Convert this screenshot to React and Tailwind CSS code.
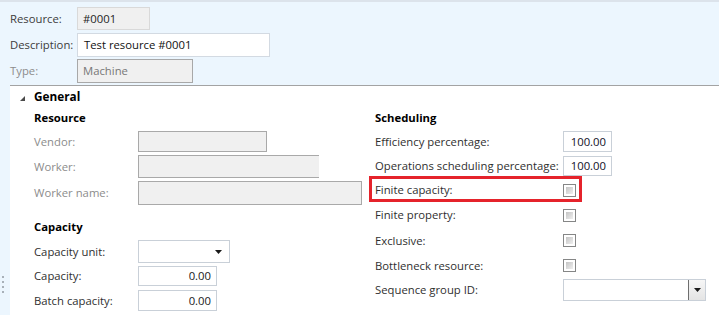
import React from "react";

const font = { fontFamily: '"Open Sans", "Noto Sans", sans-serif' };

function Arrow() {
  return (
    <svg width="7" height="4" viewBox="0 0 7 4" className="block">
      <polygon points="0,0 7,0 3.5,4" fill="#1a1a1a" />
    </svg>
  );
}

function Checkbox() {
  return (
    <div className="w-[13px] h-[13px] border border-[#858686] bg-white p-[2px]">
      <div className="w-full h-full bg-gradient-to-br from-[#c4c4c4] to-[#efefef]" />
    </div>
  );
}

function LeftRow({ label, h, mt, disabled, children }) {
  return (
    <div className={`flex items-center ${h} ${mt}`}>
      <div className={`w-[104px] shrink-0 whitespace-nowrap ${disabled ? "text-[#8c8c8c]" : "text-[#2f2f2f]"}`}>{label}</div>
      {children}
    </div>
  );
}

function RightRow({ label, h, children }) {
  return (
    <div className={`flex items-center ${h}`}>
      <div className="w-[188px] shrink-0 whitespace-nowrap text-[#2f2f2f]">{label}</div>
      {children}
    </div>
  );
}

export default function App() {
  return (
    <div
      className="w-[719px] h-[315px] overflow-hidden bg-[#ecf6fe] border-t-2 border-[#dce3eb] text-[11.3px] leading-none relative"
      style={font}
    >
      {/* header fields */}
      <div className="pl-[10px] pt-[5px] flex flex-col">
        <div className="flex items-center h-[23px]">
          <div className="w-[67px] text-[#3c3c3c]">Resource:</div>
          <div className="w-[73px] h-[23px] bg-[#f0f0f0] border border-[#d9d9d9] flex items-center px-[5px] text-[#1e1e1e]">#0001</div>
        </div>
        <div className="flex items-center h-[24px] mt-[3px]">
          <div className="w-[67px] text-[#3c3c3c]">Description:</div>
          <div className="w-[193px] h-[24px] bg-white border border-[#d3dae2] flex items-center px-[6px] text-[#111]">Test resource #0001</div>
        </div>
        <div className="flex items-center h-[24px] mt-[2px]">
          <div className="w-[67px] text-[#8c8c8c]">Type:</div>
          <div className="w-[116px] h-[24px] bg-[#f0f0f0] border border-[#a8a8a8] flex items-center px-[5px] text-[#777]">Machine</div>
        </div>
      </div>

      {/* grip */}
      <div className="absolute left-[2px] top-[274px] flex flex-col gap-[3px]">
        <div className="w-[2px] h-[2px] bg-[#a8b0b8]" />
        <div className="w-[2px] h-[2px] bg-[#a8b0b8]" />
        <div className="w-[2px] h-[2px] bg-[#a8b0b8]" />
        <div className="w-[2px] h-[2px] bg-[#a8b0b8]" />
      </div>

      {/* panel */}
      <div className="ml-[10px] mt-[2px] bg-white border-t border-[#a3a3a3] h-[240px]">
        <div className="flex items-center h-[21px] pl-[10px]">
          <svg width="5" height="5" viewBox="0 0 5 5" className="block mt-[3px]">
            <polygon points="5,0 5,5 0,5" fill="#4a4a4a" />
          </svg>
          <span className="ml-[9px] font-bold text-[11.8px] text-black">General</span>
        </div>

        <div className="flex pl-[24px]">
          {/* left column */}
          <div className="w-[341px] shrink-0">
            <div className="h-[22px] flex items-center font-bold text-black">Resource</div>
            <LeftRow label="Vendor:" h="h-[21px]" mt="mt-[2px]" disabled>
              <div className="w-[129px] h-[21px] bg-[#f0f0f0] border border-[#a9a9a9]" />
            </LeftRow>
            <LeftRow label="Worker:" h="h-[23px]" mt="mt-[3px]" disabled>
              <div className="w-[181px] h-[23px] bg-[#f0f0f0] border border-[#a9a9a9] border-r-0" />
            </LeftRow>
            <LeftRow label="Worker name:" h="h-[24px]" mt="mt-[3px]" disabled>
              <div className="w-[224px] h-[24px] bg-[#f0f0f0] border border-[#a9a9a9]" />
            </LeftRow>
            <div className="h-[22px] flex items-center font-bold text-black mt-[11px]">Capacity</div>
            <LeftRow label="Capacity unit:" h="h-[23px]" mt="mt-[2px]">
              <div className="w-[92px] h-[23px] bg-white border border-[#c9d0d8] flex items-center justify-end pr-[7px]">
                <Arrow />
              </div>
            </LeftRow>
            <LeftRow label="Capacity:" h="h-[20px]" mt="mt-[3px]">
              <div className="w-[79px] h-[20px] bg-white border border-[#c9d0d8] flex items-center justify-end pr-[5px] text-[#1a1a1a]">0.00</div>
            </LeftRow>
            <LeftRow label="Batch capacity:" h="h-[21px]" mt="mt-[4px]">
              <div className="w-[79px] h-[21px] bg-white border border-[#c9d0d8] flex items-center justify-end pr-[5px] text-[#1a1a1a]">0.00</div>
            </LeftRow>
          </div>

          {/* right column */}
          <div className="flex-1">
            <div className="h-[22px] flex items-center font-bold text-black">Scheduling</div>
            <div className="mt-[2px]">
              <RightRow label="Efficiency percentage:" h="h-[21px]">
                <div className="w-[49px] h-[21px] bg-white border border-[#c9d0d8] flex items-center justify-end pr-[5px] text-[#101028]">100.00</div>
              </RightRow>
            </div>
            <div className="mt-[4px]">
              <RightRow label="Operations scheduling percentage:" h="h-[20px]">
                <div className="w-[49px] h-[20px] bg-white border border-[#c9d0d8] flex items-center justify-end pr-[5px] text-[#101028]">100.00</div>
              </RightRow>
            </div>
            <div className="relative mt-[2px]">
              <RightRow label="Finite capacity:" h="h-[24px]">
                <Checkbox />
              </RightRow>
              <div className="absolute left-[-6px] top-[-2px] w-[213px] h-[26px] border-[3px] border-[#e5232b] pointer-events-none" />
            </div>
            <RightRow label="Finite property:" h="h-[26px]">
              <Checkbox />
            </RightRow>
            <RightRow label="Exclusive:" h="h-[25px]">
              <Checkbox />
            </RightRow>
            <RightRow label="Bottleneck resource:" h="h-[25px]">
              <Checkbox />
            </RightRow>
            <div className="mt-[1px]">
              <RightRow label="Sequence group ID:" h="h-[22px]">
                <div className="w-[143px] h-[22px] bg-white border border-[#c9d0d8] flex justify-end">
                  <div className="w-[17px] h-full border-l border-[#6e6e6e] bg-gradient-to-b from-[#f6f6f6] to-[#e4e4e4] flex items-center justify-center">
                    <Arrow />
                  </div>
                </div>
              </RightRow>
            </div>
          </div>
        </div>
      </div>
    </div>
  );
}
